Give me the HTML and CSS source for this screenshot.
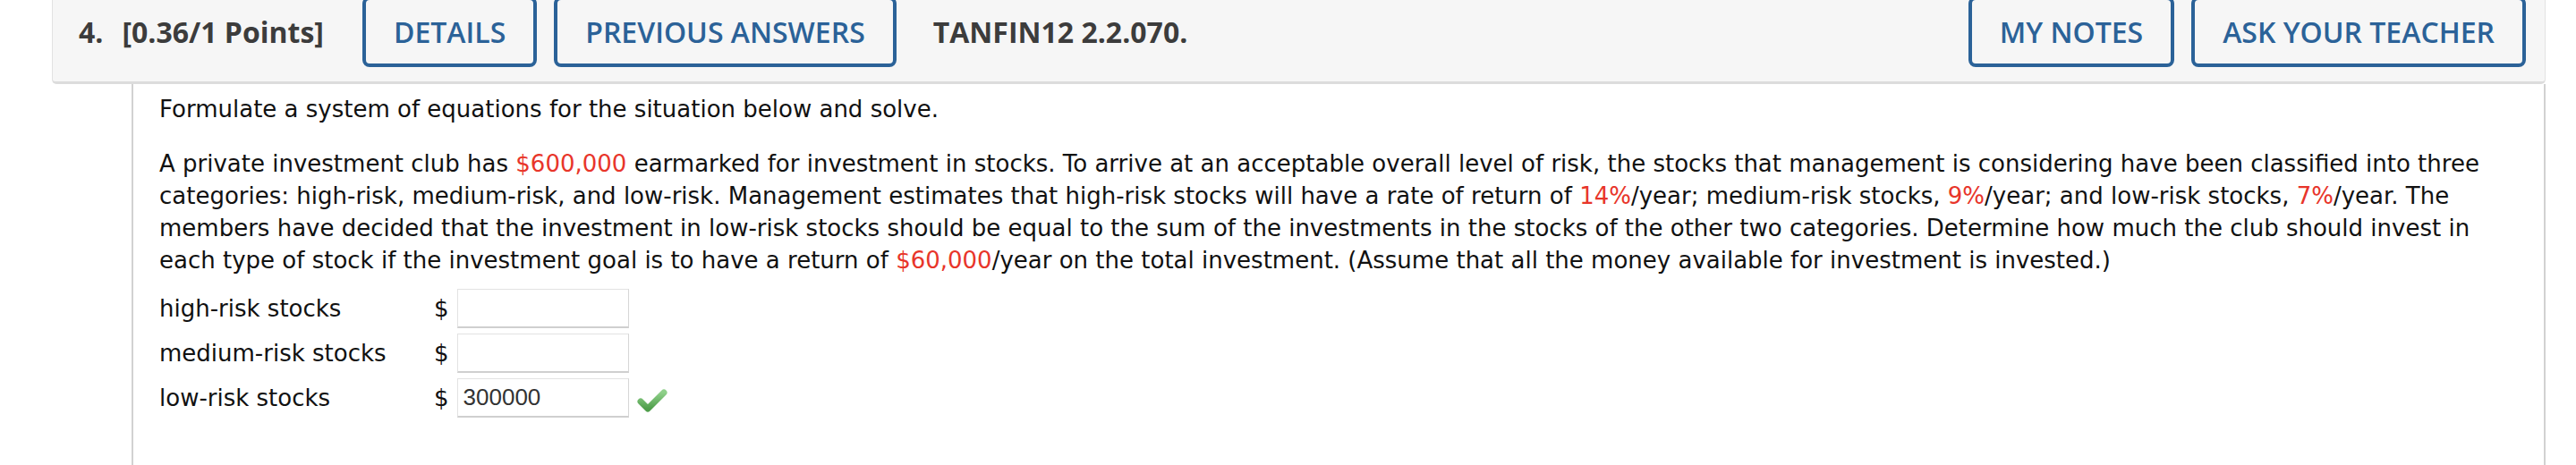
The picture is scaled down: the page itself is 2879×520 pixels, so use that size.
FILE: index.html
```html
<!DOCTYPE html>
<html lang="en">
<head>
<meta charset="utf-8">
<title>Question 4</title>
<link rel="stylesheet" href="styles.css">
</head>
<body>
<div class="question">
  <div class="qhead">
    <span class="qnum">4.</span>
    <span class="pts">[0.36/1 Points]</span>
    <button class="btn btn-first">DETAILS</button>
    <button class="btn">PREVIOUS ANSWERS</button>
    <span class="code">TANFIN12 2.2.070.</span>
    <span class="spacer"></span>
    <button class="btn">MY NOTES</button>
    <button class="btn">ASK YOUR TEACHER</button>
  </div>
  <div class="qbody">
    <p class="intro">Formulate a system of equations for the situation below and solve.</p>
    <p class="text">A private investment club has <span class="red">$600,000</span> earmarked for investment in stocks. To arrive at an acceptable overall level of risk, the stocks that management is considering have been classified into three categories: high-risk, medium-risk, and low-risk. Management estimates that high-risk stocks will have a rate of return of <span class="red">14%</span>/year; medium-risk stocks, <span class="red">9%</span>/year; and low-risk stocks, <span class="red">7%</span>/year. The members have decided that the investment in low-risk stocks should be equal to the sum of the investments in the stocks of the other two categories. Determine how much the club should invest in each type of stock if the investment goal is to have a return of <span class="red">$60,000</span>/year on the total investment. (Assume that all the money available for investment is invested.)</p>
    <div class="answers">
      <span class="label">high-risk stocks</span>
      <span class="dollar">$</span>
      <input class="field" type="text" value="">
      <span class="mark"></span>

      <span class="label">medium-risk stocks</span>
      <span class="dollar">$</span>
      <input class="field" type="text" value="">
      <span class="mark"></span>

      <span class="label">low-risk stocks</span>
      <span class="dollar">$</span>
      <input class="field" type="text" value="300000">
      <span class="mark">
        <svg class="check" width="34" height="28" viewBox="0 0 34 28">
          <defs>
            <linearGradient id="g" x1="0" y1="0" x2="0" y2="1">
              <stop offset="0" stop-color="#8fd08a"/>
              <stop offset="1" stop-color="#4f9e4b"/>
            </linearGradient>
          </defs>
          <polyline points="4,15 12,23 30,5" fill="none" stroke="url(#g)" stroke-width="7" stroke-linecap="round" stroke-linejoin="round"/>
        </svg>
      </span>
    </div>
  </div>
</div>
</body>
</html>
```

FILE: styles.css
```css
html, body {
  margin: 0;
  padding: 0;
  background: #ffffff;
}

.question {
  width: 2845px;
}

.qhead {
  margin-top: -16px;
  margin-left: 58px;
  display: flex;
  align-items: center;
  background: #f6f6f6;
  border: 1px solid #e2e2e2;
  border-top: none;
  border-bottom: 3px solid #dcdcdc;
  border-radius: 0 0 5px 5px;
  padding: 12px 21px 16px 29px;
  font-family: "Open Sans", "Liberation Sans", sans-serif;
  color: #3c3c3c;
}

.qnum {
  font-size: 32px;
  font-weight: 700;
  margin-right: 21px;
}

.pts {
  font-size: 32px;
  font-weight: 700;
  margin-right: 43px;
}

.btn {
  height: 79px;
  padding: 0 31px;
  background: #f6f6f6;
  border: 4px solid #2b6298;
  border-radius: 8px;
  color: #2b6298;
  font-family: "Open Sans", "Liberation Sans", sans-serif;
  font-size: 32px;
  font-weight: 600;
  margin-left: 19px;
  line-height: 1;
}

.btn-first {
  margin-left: 0;
}

.code {
  font-size: 32px;
  font-weight: 700;
  margin-left: 41px;
}

.spacer {
  flex: 1;
}

.qbody {
  margin-left: 147px;
  min-height: 440px;
  border-left: 2px solid #d2d2d2;
  border-right: 2px solid #d2d2d2;
  padding: 10px 40px 0 29px;
  font-family: "DejaVu Sans", Verdana, sans-serif;
  font-size: 26px;
  line-height: 36px;
  color: #111111;
}

.qbody p {
  margin: 0 0 25px 0;
}

.qbody p.text {
  margin-bottom: 11px;
}

.red {
  color: #e8352a;
}

.answers {
  display: grid;
  grid-template-columns: 307px auto 192px auto;
  grid-auto-rows: 50px;
  align-items: center;
  justify-content: start;
}

.dollar {
  margin-right: 9px;
}

.field {
  box-sizing: border-box;
  width: 192px;
  height: 44px;
  margin: 0;
  padding: 0 6px;
  border: 1px solid #e2e2e2;
  border-bottom: 2px solid #cfcfcf;
  border-right-color: #d6d6d6;
  background: #ffffff;
  font-family: "Liberation Sans", Arial, sans-serif;
  font-size: 26px;
  color: #333333;
  outline: none;
}

.mark {
  display: flex;
  align-items: center;
  padding-left: 9px;
  padding-top: 6px;
}

.check {
  display: block;
}
```
